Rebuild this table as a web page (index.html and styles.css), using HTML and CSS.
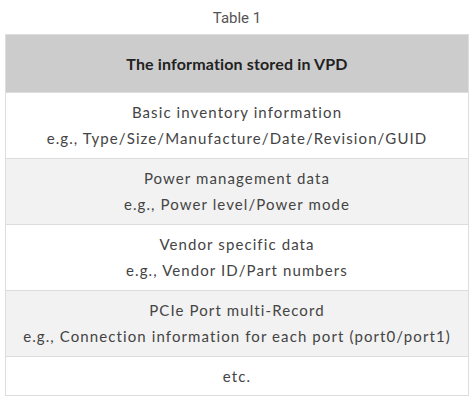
FILE: index.html
```html
<!DOCTYPE html>
<html>
<head>
<meta charset="utf-8">
<link rel="stylesheet" href="styles.css">
</head>
<body>
<div class="caption">Table 1</div>
<table class="vpd">
  <thead>
    <tr><th>The information stored in VPD</th></tr>
  </thead>
  <tbody>
    <tr><td><span class="line">Basic inventory information</span><span class="line">e.g., Type/Size/Manufacture/Date/Revision/GUID</span></td></tr>
    <tr class="alt"><td><span class="line">Power management data</span><span class="line">e.g., Power level/Power mode</span></td></tr>
    <tr><td><span class="line">Vendor specific data</span><span class="line">e.g., Vendor ID/Part numbers</span></td></tr>
    <tr class="alt"><td><span class="line">PCIe Port multi-Record</span><span class="line">e.g., Connection information for each port (port0/port1)</span></td></tr>
    <tr><td class="last"><span class="line">etc.</span></td></tr>
  </tbody>
</table>
</body>
</html>
```
FILE: styles.css
```css
html, body {
  margin: 0;
  padding: 0;
  background: #ffffff;
}
body {
  padding: 7px 5px 0 5px;
}
.caption {
  font-family: Roboto, "Liberation Sans", sans-serif;
  font-size: 15px;
  color: #555555;
  text-align: center;
  line-height: 22px;
  height: 27px;
}
.vpd {
  width: 464px;
  border-collapse: collapse;
  font-family: Lato, "DejaVu Sans", sans-serif;
  color: #444444;
}
.vpd th {
  background: #cccccc;
  border: 1px solid #dddddd;
  height: 57px;
  padding: 0;
  font-size: 16px;
  letter-spacing: 0.15px;
  font-weight: bold;
  color: #222222;
  text-align: center;
}
.vpd td {
  border: 1px solid #dddddd;
  padding: 6px 0 7px 0;
  line-height: 26px;
  font-size: 15px;
  letter-spacing: 1.1px;
  text-align: center;
  background: #ffffff;
}
.vpd .line {
  display: block;
}
.vpd tr.alt td {
  background: #f2f2f2;
}
.vpd td.last {
  padding: 6px 0 6px 0;
}
```
